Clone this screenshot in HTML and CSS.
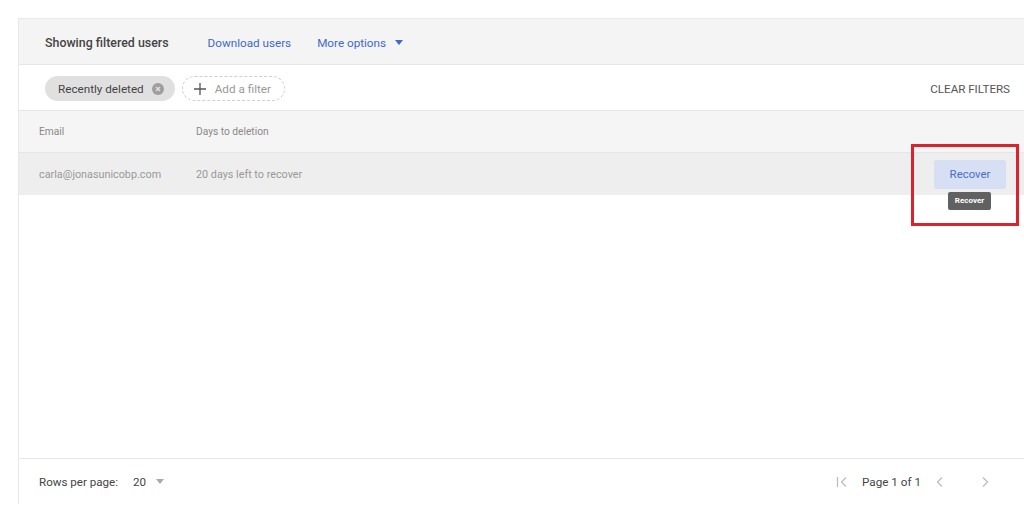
FILE: index.html
```html
<!DOCTYPE html>
<html lang="en">
<head>
  <meta charset="UTF-8">
  <title>Users</title>
  <link rel="stylesheet" href="styles.css">
</head>
<body>
  <div class="users-card">
    <div class="top-bar">
      <span class="top-title">Showing filtered users</span>
      <a class="top-link" href="#">Download users</a>
      <a class="top-link more" href="#">More options <span class="caret"></span></a>
    </div>

    <div class="filter-bar">
      <div class="filters">
        <span class="chip">Recently deleted
          <svg width="12" height="12" viewBox="0 0 12 12"><circle cx="6" cy="6" r="6" fill="#9e9e9e"/><path d="M4 4l4 4M8 4l-4 4" stroke="#e0e0e0" stroke-width="1.5"/></svg>
        </span>
        <span class="chip add-chip">
          <svg width="12" height="12" viewBox="0 0 12 12"><path d="M6 0v12M0 6h12" stroke="#555" stroke-width="1.3"/></svg>
          Add a filter
        </span>
      </div>
      <a class="clear-link" href="#">CLEAR FILTERS</a>
    </div>

    <div class="table-head">
      <span class="col-email">Email</span>
      <span class="col-days">Days to deletion</span>
    </div>

    <div class="table-row">
      <span class="col-email">carla@jonasunicobp.com</span>
      <span class="col-days">20 days left to recover</span>
      <div class="action">
        <button class="recover-btn">Recover</button>
        <span class="tooltip">Recover</span>
        <span class="highlight"></span>
      </div>
    </div>

    <div class="table-empty"></div>

    <div class="footer">
      <div class="rows-per-page">
        Rows per page:
        <span class="rows-value">20 <span class="caret gray"></span></span>
      </div>
      <div class="pager">
        <svg width="14" height="14" viewBox="0 0 14 14"><path d="M2.5 2v10M11 2.5L6.5 7l4.5 4.5" stroke="#bdbdbd" stroke-width="1.3" fill="none"/></svg>
        <span class="page-label">Page 1 of 1</span>
        <svg class="prev" width="14" height="14" viewBox="0 0 14 14"><path d="M9 2.5L4.5 7 9 11.5" stroke="#bdbdbd" stroke-width="1.3" fill="none"/></svg>
        <svg class="next" width="14" height="14" viewBox="0 0 14 14"><path d="M5 2.5L9.5 7 5 11.5" stroke="#bdbdbd" stroke-width="1.3" fill="none"/></svg>
      </div>
    </div>
  </div>
</body>
</html>
```

FILE: styles.css
```css
body {
  margin: 0;
  padding: 18px 0 0 18px;
  font-family: Roboto, "Liberation Sans", sans-serif;
  background: #fff;
}

.users-card {
  border-left: 1px solid #e8e8e8;
  border-top: 1px solid #eaeaea;
  height: 485px;
  display: flex;
  flex-direction: column;
}

.top-bar {
  display: flex;
  align-items: center;
  height: 46px;
  background: #f4f4f4;
  border-bottom: 1px solid #e6e6e6;
  padding: 2px 0 0 26px;
  box-sizing: border-box;
  font-size: 11.7px;
}

.top-title {
  color: #444;
  font-weight: 500;
  font-size: 12.4px;
  margin-right: 39px;
}

.top-link {
  color: #3f6ac9;
  text-decoration: none;
  margin-right: 26px;
}

.caret {
  display: inline-block;
  width: 0;
  height: 0;
  border-left: 4.5px solid transparent;
  border-right: 4.5px solid transparent;
  border-top: 5px solid #3f6ac9;
  margin-left: 6px;
  vertical-align: 2px;
}

.caret.gray {
  border-top-color: #aaa;
  margin-left: 7px;
}

.filter-bar {
  display: flex;
  align-items: center;
  justify-content: space-between;
  height: 46px;
  padding: 2px 14px 0 26px;
  box-sizing: border-box;
  border-bottom: 1px solid #e6e6e6;
}

.filters {
  display: flex;
  gap: 7px;
}

.chip {
  display: inline-flex;
  align-items: center;
  gap: 8px;
  height: 25px;
  padding: 0 11px 0 13px;
  border-radius: 13px;
  background: #e0e0e0;
  color: #444;
  font-size: 11.7px;
  box-sizing: border-box;
}

.add-chip {
  background: #fff;
  border: 1px dashed #cfcfcf;
  color: #999;
  padding: 0 13px 0 11px;
  gap: 9px;
}

.clear-link {
  color: #555;
  font-size: 11.6px;
  text-decoration: none;
}

.table-head,
.table-row {
  display: flex;
  align-items: center;
  padding-left: 20px;
}

.table-head {
  height: 41px;
  background: #f5f5f5;
  border-bottom: 1px solid #e6e6e6;
  color: #888;
  font-size: 10.2px;
}

.table-row {
  height: 42px;
  background: #eeeeee;
  color: #999;
  font-size: 10.8px;
}

.col-email {
  width: 157px;
}

.col-days {
  flex: 1;
}

.action {
  position: relative;
  margin-right: 18px;
}

.recover-btn {
  background: #d6dff3;
  border: none;
  border-radius: 2px;
  color: #4a6fc8;
  font-family: inherit;
  font-size: 11.4px;
  width: 72px;
  height: 29px;
  padding: 0;
}

.tooltip {
  position: absolute;
  top: 32px;
  left: 14px;
  width: 43px;
  height: 18px;
  line-height: 18px;
  background: #616161;
  color: #fff;
  font-size: 8px;
  font-weight: bold;
  text-align: center;
  border-radius: 2px;
}

.highlight {
  position: absolute;
  left: -23px;
  top: -16px;
  width: 102px;
  height: 76px;
  border: 3px solid #d9232f;
}

.table-empty {
  flex: 1;
  border-bottom: 1px solid #e6e6e6;
}

.footer {
  display: flex;
  align-items: center;
  justify-content: space-between;
  height: 45px;
  padding: 0 32px 0 20px;
  font-size: 11.6px;
  color: #444;
}

.rows-value {
  margin-left: 12px;
}

.pager {
  display: flex;
  align-items: center;
}

.page-label {
  margin: 0 12px 0 13px;
  font-size: 11.7px;
}

.next {
  margin-left: 31px;
}
```
